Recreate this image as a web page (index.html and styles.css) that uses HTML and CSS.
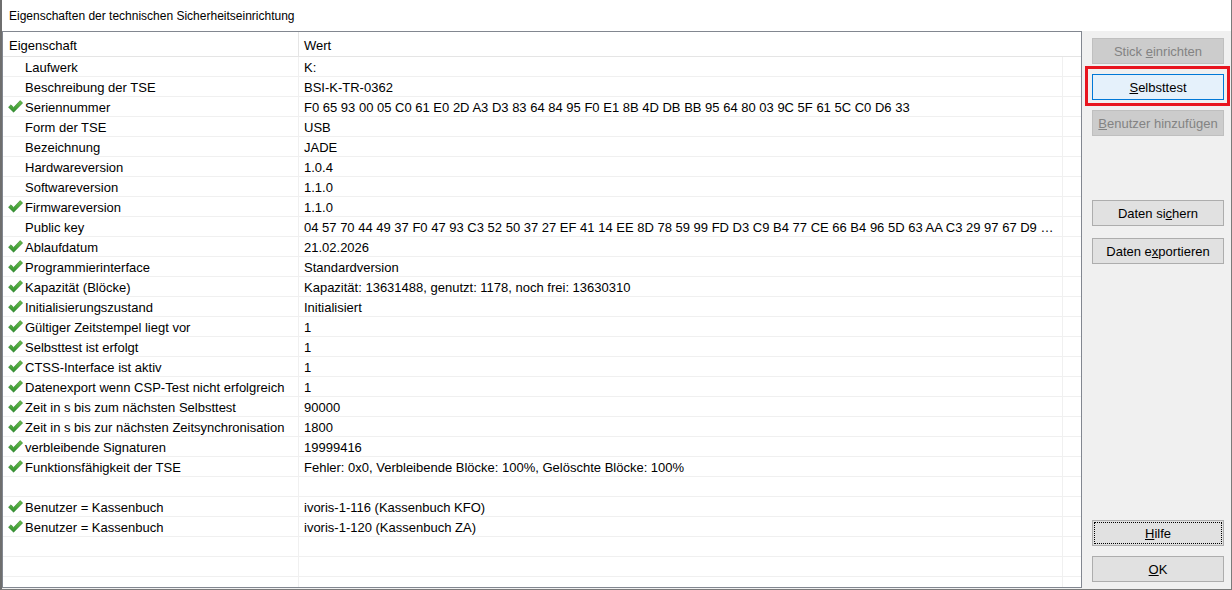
FILE: index.html
```html
<!DOCTYPE html>
<html lang="de">
<head>
<meta charset="utf-8">
<title>Eigenschaften der technischen Sicherheitseinrichtung</title>
<link rel="stylesheet" href="styles.css">
</head>
<body>
<svg width="0" height="0" class="defs">
  <defs>
    <linearGradient id="g" x1="0" y1="0" x2="0" y2="1">
      <stop offset="0" stop-color="#6cc04a"/>
      <stop offset="1" stop-color="#2f8f2f"/>
    </linearGradient>
    <symbol id="chk" viewBox="0 0 15 13">
      <path d="M0.5 7.2 L3 4.8 L5.6 7.4 L12.2 0.6 L14.6 3 L5.6 12.2 Z" fill="url(#g)" stroke="#2d7d2d" stroke-width="0.6" stroke-linejoin="round"/>
    </symbol>
  </defs>
</svg>
<div class="window">
  <div class="titlebar">Eigenschaften der technischen Sicherheitseinrichtung</div>
  <div class="body">
    <div class="list">
      <div class="row head"><div class="c1">Eigenschaft</div><div class="c2">Wert</div><div class="c3"></div></div>
      <div class="row"><div class="c1"><span class="ic"></span>Laufwerk</div><div class="c2">K:</div><div class="c3"></div></div>
      <div class="row"><div class="c1"><span class="ic"></span>Beschreibung der TSE</div><div class="c2">BSI-K-TR-0362</div><div class="c3"></div></div>
      <div class="row"><div class="c1"><svg class="ic"><use href="#chk"/></svg>Seriennummer</div><div class="c2">F0 65 93 00 05 C0 61 E0 2D A3 D3 83 64 84 95 F0 E1 8B 4D DB BB 95 64 80 03 9C 5F 61 5C C0 D6 33</div><div class="c3"></div></div>
      <div class="row"><div class="c1"><span class="ic"></span>Form der TSE</div><div class="c2">USB</div><div class="c3"></div></div>
      <div class="row"><div class="c1"><span class="ic"></span>Bezeichnung</div><div class="c2">JADE</div><div class="c3"></div></div>
      <div class="row"><div class="c1"><span class="ic"></span>Hardwareversion</div><div class="c2">1.0.4</div><div class="c3"></div></div>
      <div class="row"><div class="c1"><span class="ic"></span>Softwareversion</div><div class="c2">1.1.0</div><div class="c3"></div></div>
      <div class="row"><div class="c1"><svg class="ic"><use href="#chk"/></svg>Firmwareversion</div><div class="c2">1.1.0</div><div class="c3"></div></div>
      <div class="row"><div class="c1"><span class="ic"></span>Public key</div><div class="c2">04 57 70 44 49 37 F0 47 93 C3 52 50 37 27 EF 41 14 EE 8D 78 59 99 FD D3 C9 B4 77 CE 66 B4 96 5D 63 AA C3 29 97 67 D9 …</div><div class="c3"></div></div>
      <div class="row"><div class="c1"><svg class="ic"><use href="#chk"/></svg>Ablaufdatum</div><div class="c2">21.02.2026</div><div class="c3"></div></div>
      <div class="row"><div class="c1"><svg class="ic"><use href="#chk"/></svg>Programmierinterface</div><div class="c2">Standardversion</div><div class="c3"></div></div>
      <div class="row"><div class="c1"><svg class="ic"><use href="#chk"/></svg>Kapazität (Blöcke)</div><div class="c2">Kapazität: 13631488, genutzt: 1178, noch frei: 13630310</div><div class="c3"></div></div>
      <div class="row"><div class="c1"><svg class="ic"><use href="#chk"/></svg>Initialisierungszustand</div><div class="c2">Initialisiert</div><div class="c3"></div></div>
      <div class="row"><div class="c1"><svg class="ic"><use href="#chk"/></svg>Gültiger Zeitstempel liegt vor</div><div class="c2">1</div><div class="c3"></div></div>
      <div class="row"><div class="c1"><svg class="ic"><use href="#chk"/></svg>Selbsttest ist erfolgt</div><div class="c2">1</div><div class="c3"></div></div>
      <div class="row"><div class="c1"><svg class="ic"><use href="#chk"/></svg>CTSS-Interface ist aktiv</div><div class="c2">1</div><div class="c3"></div></div>
      <div class="row"><div class="c1"><svg class="ic"><use href="#chk"/></svg>Datenexport wenn CSP-Test nicht erfolgreich</div><div class="c2">1</div><div class="c3"></div></div>
      <div class="row"><div class="c1"><svg class="ic"><use href="#chk"/></svg>Zeit in s bis zum nächsten Selbsttest</div><div class="c2">90000</div><div class="c3"></div></div>
      <div class="row"><div class="c1"><svg class="ic"><use href="#chk"/></svg>Zeit in s bis zur nächsten Zeitsynchronisation</div><div class="c2">1800</div><div class="c3"></div></div>
      <div class="row"><div class="c1"><svg class="ic"><use href="#chk"/></svg>verbleibende Signaturen</div><div class="c2">19999416</div><div class="c3"></div></div>
      <div class="row"><div class="c1"><svg class="ic"><use href="#chk"/></svg>Funktionsfähigkeit der TSE</div><div class="c2">Fehler: 0x0, Verbleibende Blöcke: 100%, Gelöschte Blöcke: 100%</div><div class="c3"></div></div>
      <div class="row"><div class="c1"></div><div class="c2"></div><div class="c3"></div></div>
      <div class="row"><div class="c1"><svg class="ic"><use href="#chk"/></svg>Benutzer = Kassenbuch</div><div class="c2">ivoris-1-116 (Kassenbuch KFO)</div><div class="c3"></div></div>
      <div class="row"><div class="c1"><svg class="ic"><use href="#chk"/></svg>Benutzer = Kassenbuch</div><div class="c2">ivoris-1-120 (Kassenbuch ZA)</div><div class="c3"></div></div>
      <div class="row"><div class="c1"></div><div class="c2"></div><div class="c3"></div></div>
      <div class="row"><div class="c1"></div><div class="c2"></div><div class="c3"></div></div>
      <div class="row last"><div class="c1"></div><div class="c2"></div><div class="c3"></div></div>
    </div>
    <div class="panel">
      <button class="btn disabled">Stick <u>e</u>inrichten</button>
      <div class="hl"><button class="btn hot"><u>S</u>elbsttest</button></div>
      <button class="btn disabled"><u>B</u>enutzer hinzufügen</button>
      <button class="btn g1">Daten si<u>c</u>hern</button>
      <button class="btn g2">Daten e<u>x</u>portieren</button>
      <div class="spacer"></div>
      <button class="btn focus"><u>H</u>ilfe</button>
      <button class="btn ok"><u>O</u>K</button>
    </div>
  </div>
</div>
</body>
</html>
```
FILE: styles.css
```css
html, body {
  margin: 0;
  padding: 0;
  background: #f0f0f0;
}
.defs {
  position: absolute;
  width: 0;
  height: 0;
}
.window {
  width: 1232px;
  height: 590px;
  box-sizing: border-box;
  border: 1px solid #7a7a7a;
  border-top: none;
  border-left: 2px solid #6e6e6e;
  display: flex;
  flex-direction: column;
  background: #f0f0f0;
  font-family: "Liberation Sans", Arial, sans-serif;
  font-size: 13px;
  color: #000;
  overflow: hidden;
}
.titlebar {
  height: 31px;
  flex: none;
  background: #fff;
  box-sizing: border-box;
  padding-left: 7px;
  line-height: 32px;
  font-size: 12px;
}
.body {
  flex: 1;
  display: flex;
  min-height: 0;
}
.list {
  width: 1080px;
  height: 557px;
  box-sizing: border-box;
  border: 1px solid #828790;
  background: #fff;
  overflow: hidden;
  flex: none;
}
.row {
  display: flex;
  height: 20px;
  box-sizing: border-box;
  border-bottom: 1px solid #f0f0f0;
  align-items: stretch;
}
.row.head {
  height: 25px;
  border-bottom: 1px solid #e5e5e5;
}
.row.last {
  border-bottom: none;
}
.c1, .c2, .c3 {
  display: flex;
  align-items: center;
  white-space: nowrap;
  overflow: hidden;
  box-sizing: border-box;
}
.c1 {
  width: 296px;
  flex: none;
  border-right: 1px solid #f0f0f0;
  padding-left: 5px;
  padding-top: 2px;
}
.c2 {
  width: 764px;
  flex: none;
  border-right: 1px solid #f0f0f0;
  padding-left: 5px;
  padding-right: 6px;
  padding-top: 2px;
}
.head .c1 {
  padding-left: 6px;
  border-right-color: #e5e5e5;
}
.head .c2 {
  border-right: none;
}
.c3 {
  flex: 1;
}
.ic {
  display: inline-block;
  width: 15px;
  height: 13px;
  margin-right: 2px;
  margin-top: -2px;
  flex: none;
}
.panel {
  flex: 1;
  display: flex;
  flex-direction: column;
  padding: 7px 0 7px 10px;
}
.btn {
  width: 132px;
  height: 26px;
  box-sizing: border-box;
  border: 1px solid #adadad;
  background: #e1e1e1;
  font-family: "Liberation Sans", Arial, sans-serif;
  font-size: 13px;
  color: #000;
  padding: 0;
  margin: 0;
  flex: none;
}
.btn.disabled {
  background: #cccccc;
  border-color: #bfbfbf;
  color: #838383;
}
.btn.hot {
  background: #e5f1fb;
  border-color: #0078d7;
}
.hl {
  position: relative;
  margin: 10px 0;
  width: 132px;
  height: 26px;
}
.hl::after {
  content: "";
  position: absolute;
  left: -7px;
  top: -8px;
  right: -6px;
  bottom: -6px;
  border: 3px solid #e8141e;
  pointer-events: none;
}
.g1 {
  margin-top: 64px;
}
.g2 {
  margin-top: 12px;
}
.spacer {
  flex: 1;
}
.btn.focus {
  outline: 1px dotted #000;
  outline-offset: -3px;
}
.ok {
  margin-top: 10px;
}
```
